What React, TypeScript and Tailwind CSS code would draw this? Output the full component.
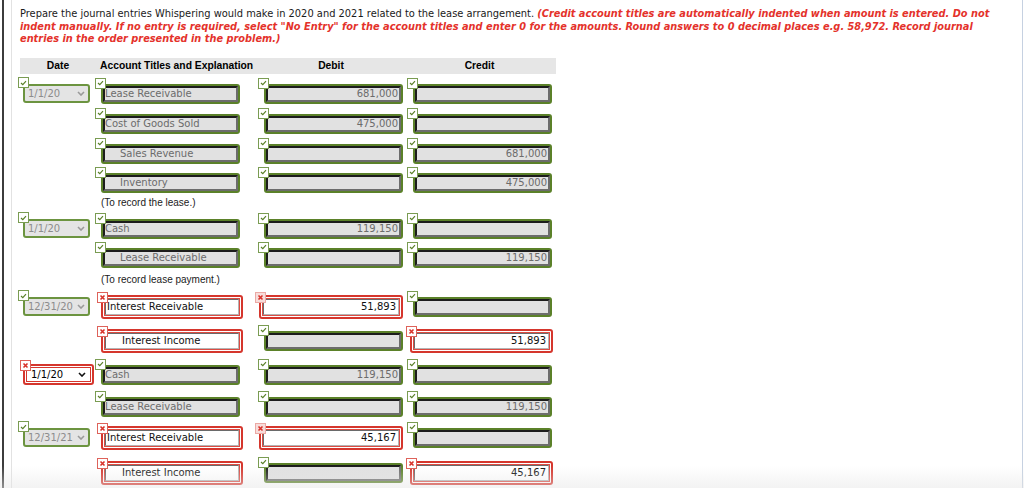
import React from 'react'

type Status = 'ok' | 'bad'

interface Cell { text: string; status: Status; indent?: boolean; soft?: boolean }

interface Row {
  kind: 'row'
  mt: string
  date?: Cell
  account: Cell
  debit: Cell
  credit: Cell
}

interface Note { kind: 'note'; mt: string; text: string }

const ok = (text = '', indent = false): Cell => ({ text, status: 'ok', indent })
const bad = (text = '', indent = false, soft = false): Cell => ({ text, status: 'bad', indent, soft })

const LINES: (Row | Note)[] = [
  { kind: 'row', mt: 'mt-[8px]', date: ok('1/1/20'), account: ok('Lease Receivable'), debit: ok('681,000'), credit: ok() },
  { kind: 'row', mt: 'mt-[6px]', account: ok('Cost of Goods Sold'), debit: ok('475,000'), credit: ok() },
  { kind: 'row', mt: 'mt-[6px]', account: ok('Sales Revenue', true), debit: ok(), credit: ok('681,000') },
  { kind: 'row', mt: 'mt-[5px]', account: ok('Inventory', true), debit: ok(), credit: ok('475,000') },
  { kind: 'note', mt: 'mt-0', text: '(To record the lease.)' },
  { kind: 'row', mt: 'mt-[7px]', date: ok('1/1/20'), account: ok('Cash'), debit: ok('119,150'), credit: ok() },
  { kind: 'row', mt: 'mt-[5px]', account: ok('Lease Receivable', true), debit: ok(), credit: ok('119,150') },
  { kind: 'note', mt: 'mt-[2px]', text: '(To record lease payment.)' },
  { kind: 'row', mt: 'mt-[8px]', date: ok('12/31/20'), account: bad('Interest Receivable'), debit: bad('51,893', false, true), credit: ok() },
  { kind: 'row', mt: 'mt-[10px]', account: bad('Interest Income', true), debit: ok(), credit: bad('51,893') },
  { kind: 'row', mt: 'mt-[10px]', date: bad('1/1/20'), account: ok('Cash'), debit: ok('119,150'), credit: ok() },
  { kind: 'row', mt: 'mt-[8px]', account: ok('Lease Receivable'), debit: ok(), credit: ok('119,150') },
  { kind: 'row', mt: 'mt-[7px]', date: ok('12/31/21'), account: bad('Interest Receivable'), debit: bad('45,167', false, true), credit: ok() },
  { kind: 'row', mt: 'mt-[11px]', account: bad('Interest Income', true), debit: ok(), credit: bad('45,167') },
]

function CheckBadge({ pos }: { pos: string }) {
  return (
    <span className={`absolute z-10 flex h-[11px] w-[11px] items-center justify-center border border-[#7a9c52] bg-white ${pos}`}>
      <svg width="7" height="6" viewBox="0 0 7 6">
        <path d="M1 3 L2.8 4.6 L6 1.2" fill="none" stroke="#5a8028" strokeWidth="1.2" />
      </svg>
    </span>
  )
}

function CrossBadge({ pos, soft }: { pos: string; soft?: boolean }) {
  return (
    <span
      className={`absolute z-10 flex h-[11px] w-[11px] items-center justify-center border ${
        soft ? 'border-[#eba9a4] bg-[#f7dcda]' : 'border-[#de625a] bg-white'
      } ${pos}`}
    >
      <svg width="7" height="7" viewBox="0 0 7 7">
        <path d="M1.5 1.5 L5.5 5.5 M5.5 1.5 L1.5 5.5" stroke="#d8322a" strokeWidth="1.6" />
      </svg>
    </span>
  )
}

function Chevron({ color }: { color: string }) {
  return (
    <svg width="8" height="5" viewBox="0 0 8 5">
      <path d="M1 1 L4 4 L7 1" fill="none" stroke={color} strokeWidth="1.6" />
    </svg>
  )
}

function DateSelect({ cell }: { cell: Cell }) {
  if (cell.status === 'ok') {
    return (
      <div className="relative ml-[3px] w-[67px]">
        <CheckBadge pos="-left-[5px] -top-[7px]" />
        <div className="flex h-[19px] w-[67px] items-center justify-between rounded-[3px] border-2 border-[#6c9440] bg-[#e4e4e4] pl-[3px] pr-[3px] text-[10px] text-[#8c8c8c]">
          <span>{cell.text}</span>
          <Chevron color="#9a9a9a" />
        </div>
      </div>
    )
  }
  return (
    <div className="relative ml-[3px] w-[71px]">
      <CrossBadge pos="-left-[3px] -top-[4px]" />
      <div className="h-[21px] w-[71px] rounded-[3px] border-2 border-[#d5362d] bg-white p-[1px]">
        <div className="flex h-full items-center justify-between border border-[#d5362d] bg-white pl-[4px] pr-[4px] text-[10px] text-black">
          <span>{cell.text}</span>
          <Chevron color="#111" />
        </div>
      </div>
    </div>
  )
}

function Field({ cell, right, redShift }: { cell: Cell; right?: boolean; redShift: string }) {
  const align = right ? 'justify-end pr-[1px]' : cell.indent ? 'pl-[15px]' : 'pl-[0px]'
  if (cell.status === 'ok') {
    return (
      <div className="relative w-[139px]">
        <CheckBadge pos="-left-[6px] -top-[6px]" />
        <div className="h-[20px] w-[139px] rounded-[3px] border-2 border-[#5b8129]">
          <div
            className={`flex h-full items-center border-2 border-t-[#1c1c1c] border-l-[#1c1c1c] border-r-[#6c6c6c] border-b-[#6c6c6c] bg-[#e1e1e1] text-[10px] leading-[12px] text-[#6c6c6c] ${align}`}
          >
            {cell.text}
          </div>
        </div>
      </div>
    )
  }
  return (
    <div className={`relative ${redShift}`}>
      <CrossBadge pos="-left-[4px] -top-[3px]" soft={cell.soft} />
      <div className="h-[24px] w-full rounded-[3px] border-2 border-[#d5362d] bg-white p-[1px]">
        <div className="h-full border border-[#dd4b42]">
          <div
            className={`flex h-full items-center border border-t-[#6a6a6a] border-l-[#6a6a6a] border-r-[#b4b4b4] border-b-[#b4b4b4] bg-white text-[10px] leading-[12px] text-[#111] ${
              right ? 'justify-end pr-[2px]' : cell.indent ? 'pl-[16px]' : 'pl-[1px]'
            }`}
          >
            {cell.text}
          </div>
        </div>
      </div>
    </div>
  )
}

export default function App() {
  return (
    <div className="relative flex h-[488px] w-[1024px] overflow-hidden bg-white font-['DejaVu_Sans',Verdana,sans-serif]">
      <div className="ml-[2px] w-[2px] bg-[#3c3c3c]" />
      <div className="ml-[7px] w-[1px] bg-[#e2e2e2]" />

      <div className="flex-1 pl-[8px] pt-[8px]">
        {/* instructions */}
        <div className="whitespace-nowrap text-[9.9px] leading-[12.5px] text-[#1a1a1a]">
          Prepare the journal entries Whispering would make in 2020 and 2021 related to the lease arrangement.{' '}
          <span className="text-[9.8px] font-bold italic text-[#e4322b]">
            (Credit account titles are automatically indented when amount is entered. Do not
            <br />
            indent manually. If no entry is required, select "No Entry" for the account titles and enter 0 for the amounts. Round answers to 0 decimal places e.g. 58,972. Record journal
            <br />
            entries in the order presented in the problem.)
          </span>
        </div>

        {/* table header */}
        <div className="mt-[12px] flex h-[16px] w-[536px] items-center bg-[#e6e6e6] font-['Liberation_Sans',Arial,sans-serif] text-[10.3px] font-bold text-black">
          <div className="w-[76px] text-center">Date</div>
          <div className="w-[168px] pl-[4px]">Account Titles and Explanation</div>
          <div className="w-[149px] pr-[15px] text-center">Debit</div>
          <div className="w-[143px] pr-[10px] text-center">Credit</div>
        </div>

        {LINES.map((l, i) =>
          l.kind === 'note' ? (
            <div key={i} className={`${l.mt} h-[15px] pl-[81px] font-['Liberation_Sans',Arial,sans-serif] text-[10px] leading-[15px] text-[#1a1a1a]`}>
              {l.text}
            </div>
          ) : (
            <div key={i} className={`${l.mt} flex h-[24px] items-center`}>
              <div className="w-[81px]">{l.date && <DateSelect cell={l.date} />}</div>
              <div className="w-[163px]">
                <Field cell={l.account} redShift="w-[142px]" />
              </div>
              <div className="w-[149px]">
                <Field cell={l.debit} right redShift="-ml-[5px] w-[144px]" />
              </div>
              <div className="w-[139px]">
                <Field cell={l.credit} right redShift="-ml-[3px] w-[143px]" />
              </div>
            </div>
          )
        )}
      </div>

      <div className="w-[1px] bg-[#c6d1e1]" />
      <div className="w-[1px] bg-white" />

      {/* faint shade at the bottom of the capture */}
      <div className="pointer-events-none absolute bottom-0 left-0 right-0 h-[22px] bg-linear-to-b from-white/0 to-[#e6e6e6]/50" />
    </div>
  )
}
